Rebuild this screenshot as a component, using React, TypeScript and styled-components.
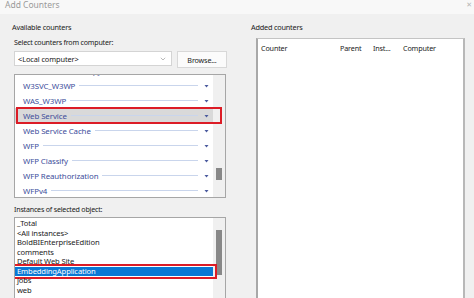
import React, { FC } from 'react';
import styled, { createGlobalStyle } from 'styled-components';

const GlobalStyle = createGlobalStyle`
  html, body {
    margin: 0;
    padding: 0;
    background: #f0f0f0;
    overflow: hidden;
  }
  body {
    font-family: "Noto Sans", "DejaVu Sans", sans-serif;
  }
`;

const counters = [
    'Volume Shadow Copy',
    'W3SVC_W3WP',
    'WAS_W3WP',
    'Web Service',
    'Web Service Cache',
    'WFP',
    'WFP Classify',
    'WFP Reauthorization',
    'WFPv4',
];

const instances = [
    '_Total',
    '<All instances>',
    'BoldBIEnterpriseEdition',
    'comments',
    'Default Web Site',
    'EmbeddingApplication',
    'jobs',
    'web',
];

const Arrow: FC<{ color: string }> = ({ color }) => (
    <svg width="5" height="4" viewBox="0 0 5 4">
        <path d="M0.5 1 L4.5 1 L2.5 3.5 Z" fill={color} />
    </svg>
);

const ComboArrow = () => (
    <svg width="6" height="4" viewBox="0 0 6 4">
        <path d="M0.8 0.8 L3 3 L5.2 0.8" fill="none" stroke="#a8a8a8" strokeWidth="0.8" />
    </svg>
);

export default function App() {
    return (
        <>
            <GlobalStyle />
            <Window>
                <TitleBar>
                    <Title>Add Counters</Title>
                    <Close>✕</Close>
                </TitleBar>
                <Body>
                    <LeftPane>
                        <GroupLabel>Available counters</GroupLabel>
                        <Label>Select counters from computer:</Label>
                        <ComputerRow>
                            <Combo>
                                <span>&lt;Local computer&gt;</span>
                                <ComboArrow />
                            </Combo>
                            <Button>Browse...</Button>
                        </ComputerRow>
                        <ListBox $height={124} $gap={6}>
                            <CounterRows>
                                {counters.map((name) => (
                                    <CounterRow key={name} $selected={name === 'Web Service'}>
                                        <CounterName>{name}</CounterName>
                                        <Rule />
                                        <Arrow color="#4a5a9e" />
                                    </CounterRow>
                                ))}
                            </CounterRows>
                            <ScrollTrack>
                                <Thumb style={{ marginTop: 93, height: 12 }} />
                            </ScrollTrack>
                        </ListBox>
                        <Label>Instances of selected object:</Label>
                        <ListBox $height={82} $gap={0}>
                            <InstanceRows>
                                {instances.map((name) => (
                                    <InstanceRow key={name} $selected={name === 'EmbeddingApplication'}>
                                        {name}
                                    </InstanceRow>
                                ))}
                            </InstanceRows>
                            <ScrollTrack>
                                <Thumb style={{ marginTop: 12, height: 45 }} />
                            </ScrollTrack>
                        </ListBox>
                    </LeftPane>
                    <RightPane>
                        <GroupLabel>Added counters</GroupLabel>
                        <AddedBox>
                            <HeaderRow>
                                <Column $width={79}>Counter</Column>
                                <Column $width={33}>Parent</Column>
                                <Column $width={30}>Inst...</Column>
                                <Column>Computer</Column>
                            </HeaderRow>
                        </AddedBox>
                    </RightPane>
                </Body>
            </Window>
        </>
    );
}

const Window = styled.div`
  width: 474px;
  height: 298px;
  display: flex;
  flex-direction: column;
  background: #f0f0f0;
  overflow: hidden;
`;

const TitleBar = styled.div`
  height: 14px;
  flex-shrink: 0;
  display: flex;
  justify-content: space-between;
  align-items: flex-start;
  padding: 0 2px 0 5px;
  background: #f8f8f8;
  overflow: hidden;
`;

const Title = styled.div`
  font-size: 8.5px;
  line-height: 10px;
  color: #9a9a9a;
`;

const Close = styled.div`
  font-size: 7px;
  line-height: 9px;
  color: #b5b5b5;
`;

const Body = styled.div`
  flex: 1;
  display: flex;
  padding: 7px 9px 0 12px;
  min-height: 0;
`;

const LeftPane = styled.div`
  width: 215px;
  display: flex;
  flex-direction: column;
`;

const RightPane = styled.div`
  flex: 1;
  margin-left: 24px;
  display: flex;
  flex-direction: column;
  min-height: 0;
`;

const GroupLabel = styled.div`
  font-size: 7.3px;
  letter-spacing: -0.2px;
  line-height: 12px;
  color: #1a1a1a;
`;

const Label = styled.div`
  font-size: 7.1px;
  letter-spacing: -0.2px;
  line-height: 12px;
  color: #1a1a1a;
  margin: 3px 0 2px 2px;
`;

const ComputerRow = styled.div`
  display: flex;
  align-items: flex-start;
  gap: 5px;
  margin: 1px 0 0 2px;
`;

const Combo = styled.div`
  width: 158px;
  height: 15px;
  box-sizing: border-box;
  display: flex;
  align-items: center;
  justify-content: space-between;
  padding: 0 5px 0 3px;
  background: #ffffff;
  border: 1px solid #d4d4d4;
  font-size: 7.4px;
  letter-spacing: -0.1px;
  color: #222;
`;

const Button = styled.div`
  width: 50px;
  height: 17px;
  box-sizing: border-box;
  display: flex;
  align-items: center;
  justify-content: center;
  background: #fbfbfb;
  border: 1px solid #d8d8d8;
  font-size: 7.2px;
  letter-spacing: -0.15px;
  color: #222;
`;

const ListBox = styled.div<{ $height: number; $gap: number }>`
  margin: ${({ $gap }) => $gap}px 0 2px 2px;
  width: 212px;
  height: ${({ $height }) => $height}px;
  flex-shrink: 0;
  box-sizing: border-box;
  display: flex;
  background: #ffffff;
  border: 1px solid #a6a6a6;
  overflow: hidden;
`;

const CounterRows = styled.div`
  flex: 1;
  margin-top: -12px;
  display: flex;
  flex-direction: column;
`;

const CounterRow = styled.div<{ $selected?: boolean }>`
  position: relative;
  height: 15px;
  flex-shrink: 0;
  display: flex;
  align-items: center;
  padding: 0 4px 0 8px;
  background: ${({ $selected }) => ($selected ? '#d9d9d9' : 'transparent')};

  &::after {
    content: '';
    display: ${({ $selected }) => ($selected ? 'block' : 'none')};
    position: absolute;
    left: 1px;
    right: -9px;
    top: -1px;
    bottom: -1px;
    border: 2px solid #dc1c26;
  }
`;

const CounterName = styled.span`
  font-size: 7.9px;
  letter-spacing: -0.1px;
  color: #3d4e9c;
  white-space: nowrap;
`;

const Rule = styled.div`
  flex: 1;
  height: 1px;
  margin: 0 6px 0 4px;
  background: #c9d5ec;
`;

const ScrollTrack = styled.div`
  width: 12px;
  flex-shrink: 0;
  display: flex;
  justify-content: center;
  background: #f0f0f0;
`;

const Thumb = styled.div`
  width: 6px;
  background: #888888;
`;

const InstanceRows = styled.div`
  flex: 1;
  padding-top: 1px;
  display: flex;
  flex-direction: column;
  min-width: 0;
`;

const InstanceRow = styled.div<{ $selected?: boolean }>`
  position: relative;
  height: 9.5px;
  flex-shrink: 0;
  padding-left: 2px;
  font-size: 7.6px;
  letter-spacing: -0.12px;
  line-height: 9.5px;
  white-space: nowrap;
  color: ${({ $selected }) => ($selected ? '#ffffff' : '#1a1a1a')};
  background: ${({ $selected }) => ($selected ? '#0a78d4' : 'transparent')};

  &::after {
    content: '';
    display: ${({ $selected }) => ($selected ? 'block' : 'none')};
    position: absolute;
    left: -3px;
    right: -4px;
    top: -3px;
    bottom: -3px;
    border: 2px solid #dc1c26;
  }
`;

const AddedBox = styled.div`
  flex: 1;
  margin: 5px 0 0 5px;
  background: #ffffff;
  border: 1px solid #c4c4c4;
  border-left: 2px solid #a8a8a8;
  border-right: 2px solid #b8b8b8;
  border-bottom: none;
`;

const HeaderRow = styled.div`
  display: flex;
  padding: 4px 0 0 3px;
  font-size: 7.2px;
  letter-spacing: -0.15px;
  line-height: 11px;
  color: #1a1a1a;
`;

const Column = styled.div<{ $width?: number }>`
  width: ${({ $width }) => ($width ? `${$width}px` : 'auto')};
  flex-shrink: 0;
  white-space: nowrap;
`;
